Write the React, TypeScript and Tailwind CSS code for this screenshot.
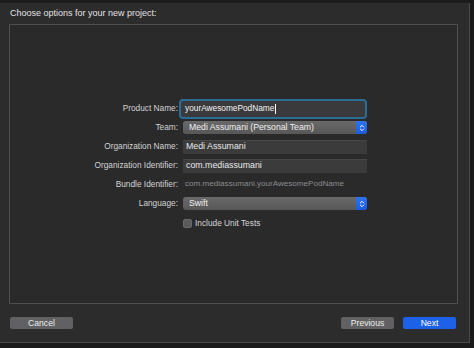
import { ChevronsUpDown } from "lucide-react";

type RowProps = {
    label: string;
    children: React.ReactNode;
}

function Row({label, children}: RowProps) {
    return (
        <div className="flex items-center h-[19px]">
            <div className="w-[168px] text-right text-[#d3d3d3] text-[8.3px]">{label}</div>
            <div className="ml-[5px] w-[184px] flex items-center">{children}</div>
        </div>
    )
}

function Popup({value}: {value: string}) {
    return (
        <div className="flex h-[13px] w-full rounded-[3px] overflow-hidden bg-gradient-to-b from-[#6a6a6a] to-[#575757]">
            <span className="flex-1 pl-[6px] leading-[13px] text-[#f0f0f0] text-[8.7px]">{value}</span>
            <span className="w-[11px] flex items-center justify-center bg-gradient-to-b from-[#2f74f0] to-[#1c5ce0]">
                <ChevronsUpDown className="w-[8px] h-[8px] text-white" strokeWidth={3}/>
            </span>
        </div>
    )
}

export default function App() {
    return (
        <div className="w-[474px] h-[348px] bg-[#1b1b1c] overflow-hidden text-[8.5px]"
             style={{fontFamily: '"Liberation Sans", Arial, sans-serif'}}>
            <div className="mt-[3px] w-[470px] h-[340px] bg-[#2c2c2d] border-r border-b border-[#4a4a4b] flex flex-col">
                {/* header */}
                <div className="h-[21px] pl-[10px] pt-[1px] flex items-center text-[#e2e2e2] text-[9px]">
                    Choose options for your new project:
                </div>

                {/* inner panel */}
                <div className="ml-[9px] w-[449px] h-[280px] border border-[#4f4f50] bg-[#2a2a2b] pt-[74px]">
                    <Row label="Product Name:">
                        <div className="w-full h-[16px] -ml-[2px] rounded-[2px] bg-[#3a3a3c] ring-[2px] ring-[#2c6c96] flex items-center pl-[4px] text-[#f4f4f4] text-[8.3px]">
                            yourAwesomePodName<span className="ml-[1px] w-[1px] h-[10px] bg-white"/>
                        </div>
                    </Row>
                    <Row label="Team:">
                        <Popup value="Medi Assumani (Personal Team)"/>
                    </Row>
                    <Row label="Organization Name:">
                        <div className="w-full h-[14px] bg-[#3b3b3c] border-t border-[#474748] flex items-center pl-[3px] text-[#e8e8e8] text-[8.8px]">
                            Medi Assumani
                        </div>
                    </Row>
                    <Row label="Organization Identifier:">
                        <div className="w-full h-[14px] bg-[#3b3b3c] border-t border-[#474748] flex items-center pl-[3px] text-[#e8e8e8] text-[8.8px]">
                            com.mediassumani
                        </div>
                    </Row>
                    <Row label="Bundle Identifier:">
                        <span className="pl-[2px] text-[#8b8b8c] text-[8.1px]">com.mediassumani.yourAwesomePodName</span>
                    </Row>
                    <Row label="Language:">
                        <Popup value="Swift"/>
                    </Row>
                    <div className="flex items-center h-[19px] mt-[1px]">
                        <div className="ml-[173px] w-[9px] h-[9px] rounded-[2px] bg-[#5a5a5b] border border-[#6a6a6b]"/>
                        <span className="ml-[3px] text-[#d6d6d6] text-[8.3px]">Include Unit Tests</span>
                    </div>
                </div>

                {/* buttons */}
                <div className="flex items-center mt-[13px] pl-[10px] pr-[13px]">
                    <button className="w-[63px] h-[12px] rounded-[2px] bg-[#616163] text-[#ececec] text-[8.6px] leading-[12px]">
                        Cancel
                    </button>
                    <div className="flex-1"/>
                    <button className="w-[53px] h-[12px] rounded-[2px] bg-[#616163] text-[#ececec] text-[8.6px] leading-[12px]">
                        Previous
                    </button>
                    <button className="ml-[9px] w-[53px] h-[12px] rounded-[2px] bg-[#1d62e6] text-white text-[8.6px] leading-[12px]">
                        Next
                    </button>
                </div>
            </div>
        </div>
    )
}
